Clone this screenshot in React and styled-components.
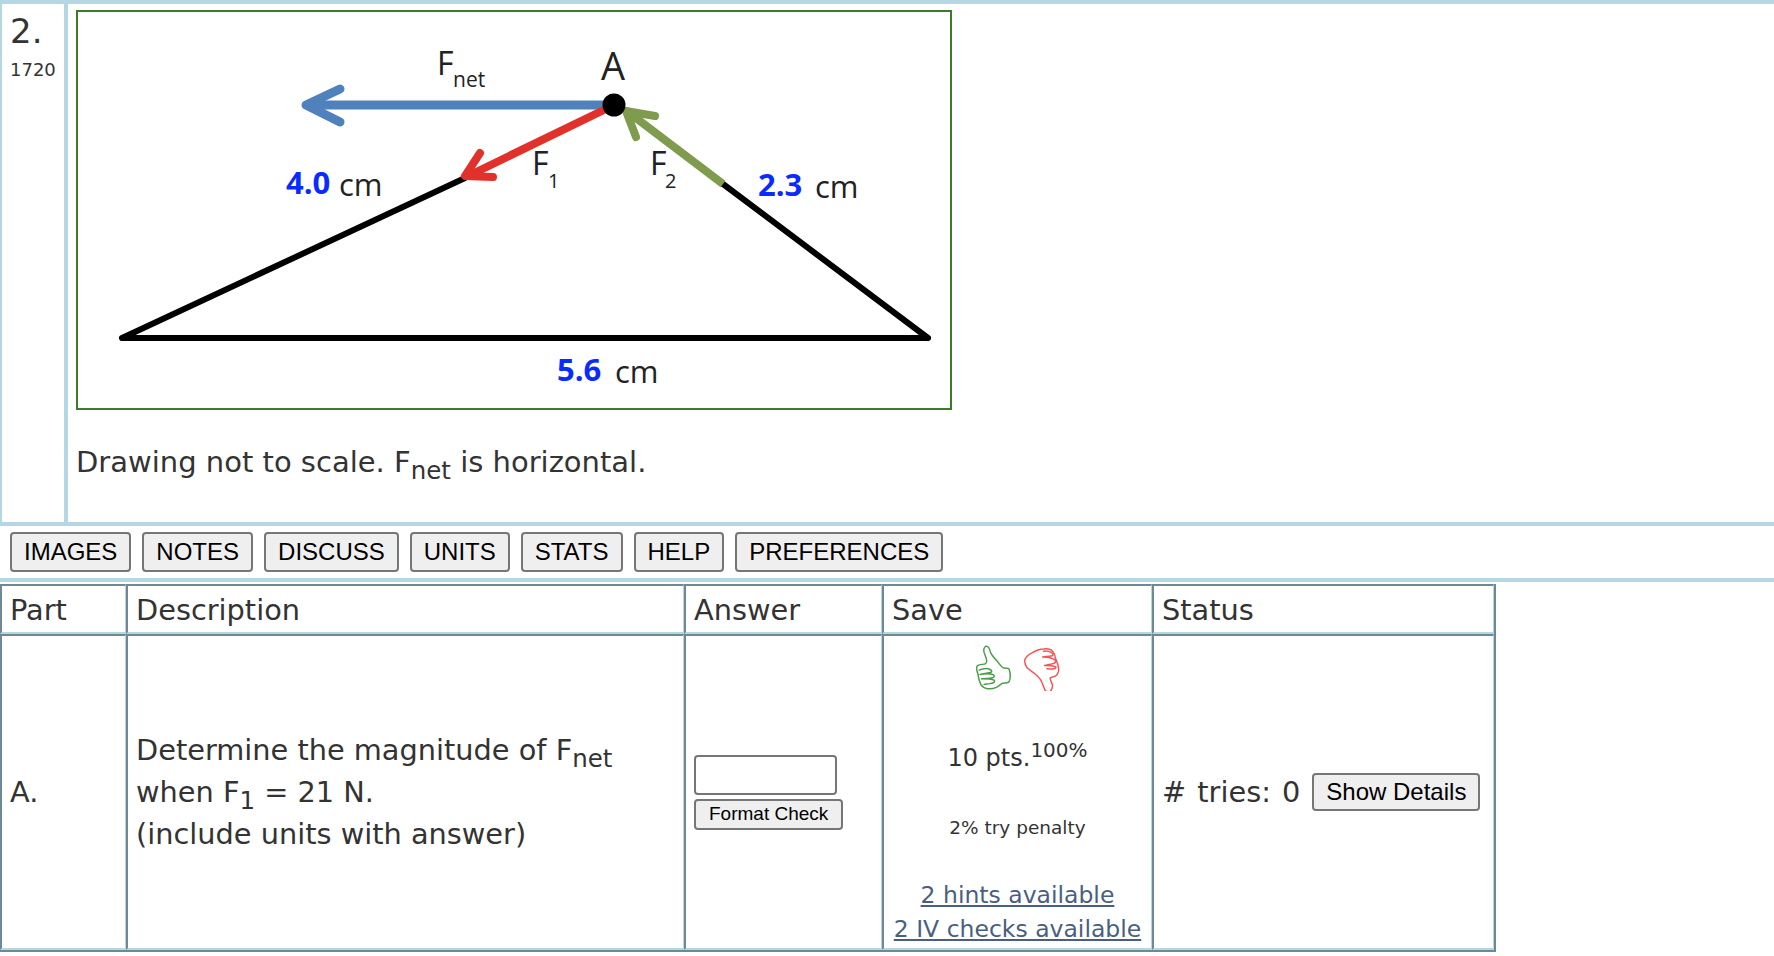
import React from 'react';
import styled, { createGlobalStyle } from 'styled-components';

const GlobalStyle = createGlobalStyle`
  html, body {
    margin: 0;
    padding: 0;
    background: white;
  }
  body {
    font-family: "DejaVu Sans", Verdana, sans-serif;
    color: #333;
  }
`;

const Page = styled.div`
  width: 1774px;
  height: 956px;
  overflow: hidden;
  border-top: 4px solid #b5d7e4;
  box-sizing: border-box;
`;

const QuestionRow = styled.div`
  display: flex;
  height: 518px;
  border-left: 2px solid #b5d7e4;
  border-bottom: 4px solid #b5d7e4;
`;

const NumberCell = styled.div`
  width: 66px;
  border-right: 4px solid #b5d7e4;
  padding: 5px 0 0 8px;
  box-sizing: border-box;
  flex: none;
`;

const QuestionNumber = styled.div`
  font-size: 34px;
  line-height: 44px;
`;

const QuestionId = styled.div`
  font-size: 18px;
  line-height: 24px;
  margin-top: 5px;
`;

const QuestionBody = styled.div`
  padding: 6px 0 0 8px;
`;

const DiagramFrame = styled.div`
  width: 872px;
  height: 396px;
  border: 2px solid #3a7d22;
`;

const Caption = styled.div`
  font-size: 29px;
  line-height: 40px;
  margin-top: 32px;
`;

const Toolbar = styled.div`
  display: flex;
  gap: 11px;
  height: 56px;
  padding: 6px 0 0 10px;
  box-sizing: border-box;
  border-bottom: 4px solid #b5d7e4;
`;

const PlainButton = styled.button`
  font-family: "Liberation Sans", Arial, sans-serif;
  font-size: ${(p) => p.$size || 24}px;
  color: black;
  background: #efefef;
  border: 2px solid #767676;
  border-radius: 4px;
  padding: 0 ${(p) => p.$pad || 12}px;
  height: ${(p) => p.$height || 40}px;
  white-space: nowrap;
`;

const PartsTable = styled.table`
  border-collapse: separate;
  border-spacing: 0;
  table-layout: fixed;
  width: 1496px;
  margin-top: 2px;
  border-right: 2px solid #6f8896;
  border-bottom: 2px solid #6f8896;
`;

const HeadCell = styled.th`
  box-sizing: border-box;
  font-weight: normal;
  text-align: left;
  font-size: 28.8px;
  height: 50px;
  padding: 2px 0 0 8px;
  border-top: 2px solid #6f8896;
  border-left: 2px solid #6f8896;
  border-bottom: 2px solid #b5d7e4;
  border-right: 1px solid #b5d7e4;
`;

const BodyCell = styled.td`
  box-sizing: border-box;
  font-size: 28.8px;
  line-height: 42px;
  height: 316px;
  padding: 0 0 0 ${(p) => (p.$flush ? 0 : 8)}px;
  border-top: 2px solid #6f8896;
  border-left: 2px solid #6f8896;
  border-bottom: 2px solid #b5d7e4;
  border-right: 1px solid #b5d7e4;
  vertical-align: middle;
`;

const Low = styled.sub`
  font-size: 24.5px;
  line-height: 0;
`;

const AnswerStack = styled.div`
  display: flex;
  flex-direction: column;
  align-items: flex-start;
  gap: 4px;
`;

const AnswerBox = styled.input`
  width: 143px;
  height: 40px;
  box-sizing: border-box;
  border: 2px solid #767676;
  border-radius: 4px;
  padding: 0;
  background: white;
`;

const SaveColumn = styled.div`
  display: flex;
  flex-direction: column;
  align-items: center;
  height: 312px;
  padding-top: 7px;
  box-sizing: border-box;
`;

const ThumbRow = styled.div`
  display: flex;
  gap: 8px;
  height: 48px;
`;

const Points = styled.div`
  font-size: 24px;
  line-height: 30px;
  margin-top: 52px;
  sup {
    font-size: 20px;
    line-height: 0;
  }
`;

const Penalty = styled.div`
  font-size: 18.5px;
  line-height: 24px;
  margin-top: 43px;
`;

const HintList = styled.div`
  display: flex;
  flex-direction: column;
  align-items: center;
  margin-top: 38px;
`;

const HintLink = styled.a`
  font-size: 23.5px;
  line-height: 34px;
  color: #4a5f80;
  text-decoration: underline;
  white-space: nowrap;
`;

const TriesRow = styled.div`
  display: flex;
  align-items: center;
  gap: 12px;
  word-spacing: 2px;
`;

const Label = styled.text`
  font-family: "Open Sans", sans-serif;
  font-size: ${(p) => p.$size}px;
  fill: ${(p) => p.$fill || '#222'};
  font-weight: ${(p) => (p.$bold ? 700 : 400)};
`;

const DiagramSvg = styled.svg`
  display: block;
`;

function ForceDiagram() {
  return (
    <DiagramSvg width="872" height="396" viewBox="78 12 872 396">
      <g fill="none" strokeLinecap="round" strokeLinejoin="round">
        <path d="M122 338H928M465 178L122 338M723 184L928 338" stroke="#000" strokeWidth="6" />
        <path d="M614 105H306" stroke="#4f81bd" strokeWidth="9" strokeLinecap="butt" />
        <path d="M340 89L306 105L340 122" stroke="#4f81bd" strokeWidth="9" />
        <path d="M610 107L468 176" stroke="#e2302a" strokeWidth="8" strokeLinecap="butt" />
        <path d="M480 153L465 176L493 177" stroke="#e2302a" strokeWidth="8" />
        <path d="M723 184L628 112" stroke="#7f9b4d" strokeWidth="8" strokeLinecap="butt" />
        <path d="M655 116L626 111L636 137" stroke="#7f9b4d" strokeWidth="8" />
      </g>
      <circle cx="614" cy="105" r="11.5" fill="#000" />
      <Label x="437" y="75" $size={32}>F</Label>
      <Label x="453" y="87" $size={21}>net</Label>
      <Label x="601" y="80" $size={38}>A</Label>
      <Label x="532" y="175" $size={32}>F</Label>
      <Label x="548" y="188" $size={20}>1</Label>
      <Label x="650" y="175" $size={32}>F</Label>
      <Label x="665" y="188" $size={20}>2</Label>
      <Label x="286" y="194" $size={31} $bold $fill="#0a2bff">4.0</Label>
      <Label x="339" y="196" $size={31}>cm</Label>
      <Label x="758" y="196" $size={31} $bold $fill="#0a2bff">2.3</Label>
      <Label x="815" y="198" $size={31}>cm</Label>
      <Label x="557" y="381" $size={31} $bold $fill="#0a2bff">5.6</Label>
      <Label x="615" y="383" $size={31}>cm</Label>
    </DiagramSvg>
  );
}

function ThumbUp() {
  return (
    <svg width="40" height="48" viewBox="30 10 120 145" fill="none" stroke="#4c9e4c" strokeWidth="4.5" strokeLinejoin="round" strokeLinecap="round">
      <path d="M65 20C72 18 76 24 80 40C85 50 95 60 100 65C106 73 112 82 118 85C125 87 133 85 135 88C140 98 141 118 135 128C128 132 120 130 115 132C108 136 102 142 95 145C87 149 78 149 70 148C60 146 54 142 50 135C46 125 42 115 42 105C38 95 37 82 40 78C48 73 60 76 65 72C71 68 68 60 60 38C58 30 60 23 65 20Z" />
      <path d="M45 92C55 88 70 86 78 90C86 94 84 99 76 100C66 102 56 103 48 105C60 103 78 102 88 106C94 111 90 115 82 116C72 118 62 118 52 118C64 118 82 118 90 122C95 128 88 131 80 132C72 134 66 134 60 135" />
    </svg>
  );
}

function ThumbDown() {
  return (
    <svg width="40" height="48" viewBox="170 10 120 145" fill="none" stroke="#f25555" strokeWidth="4.5" strokeLinejoin="round" strokeLinecap="round">
      <path d="M178 62C180 52 192 44 200 40C212 32 224 28 235 28C248 26 258 30 262 35C268 42 270 50 270 55C276 68 282 84 280 95C278 104 274 108 270 110C264 113 258 112 255 115C253 122 262 132 262 140C260 150 256 158 250 158C243 158 240 155 238 150C234 140 230 128 225 120C220 112 212 106 205 100C198 95 190 90 185 85C180 78 177 70 178 62Z" />
      <path d="M235 35C244 33 256 36 262 42C266 48 260 50 252 50C244 50 238 51 232 52C244 52 262 55 270 62C274 68 268 72 260 73C252 75 245 77 238 78C248 78 262 78 272 82C274 88 262 90 245 88" />
    </svg>
  );
}

export default function App() {
  const tools = ['IMAGES', 'NOTES', 'DISCUSS', 'UNITS', 'STATS', 'HELP', 'PREFERENCES'];
  return (
    <Page>
      <GlobalStyle />
      <QuestionRow>
        <NumberCell>
          <QuestionNumber>2.</QuestionNumber>
          <QuestionId>1720</QuestionId>
        </NumberCell>
        <QuestionBody>
          <DiagramFrame>
            <ForceDiagram />
          </DiagramFrame>
          <Caption>
            Drawing not to scale. F<Low>net</Low> is horizontal.
          </Caption>
        </QuestionBody>
      </QuestionRow>
      <Toolbar>
        {tools.map((t) => (
          <PlainButton key={t}>{t}</PlainButton>
        ))}
      </Toolbar>
      <PartsTable>
        <colgroup>
          <col style={{ width: 126 }} />
          <col style={{ width: 558 }} />
          <col style={{ width: 198 }} />
          <col style={{ width: 270 }} />
          <col />
        </colgroup>
        <thead>
          <tr>
            <HeadCell>Part</HeadCell>
            <HeadCell>Description</HeadCell>
            <HeadCell>Answer</HeadCell>
            <HeadCell>Save</HeadCell>
            <HeadCell>Status</HeadCell>
          </tr>
        </thead>
        <tbody>
          <tr>
            <BodyCell>A.</BodyCell>
            <BodyCell>
              Determine the magnitude of F<Low>net</Low>
              <br />
              when F<Low>1</Low> = 21 N.
              <br />
              (include units with answer)
            </BodyCell>
            <BodyCell>
              <AnswerStack>
                <AnswerBox type="text" />
                <PlainButton $size={19} $pad={13} $height={31}>Format Check</PlainButton>
              </AnswerStack>
            </BodyCell>
            <BodyCell $flush>
              <SaveColumn>
                <ThumbRow>
                  <ThumbUp />
                  <ThumbDown />
                </ThumbRow>
                <Points>
                  10 pts.<sup>100%</sup>
                </Points>
                <Penalty>2% try penalty</Penalty>
                <HintList>
                  <HintLink href="#">2 hints available</HintLink>
                  <HintLink href="#">2 IV checks available</HintLink>
                </HintList>
              </SaveColumn>
            </BodyCell>
            <BodyCell>
              <TriesRow>
                # tries: 0
                <PlainButton $size={24} $pad={12} $height={38}>Show Details</PlainButton>
              </TriesRow>
            </BodyCell>
          </tr>
        </tbody>
      </PartsTable>
    </Page>
  );
}
